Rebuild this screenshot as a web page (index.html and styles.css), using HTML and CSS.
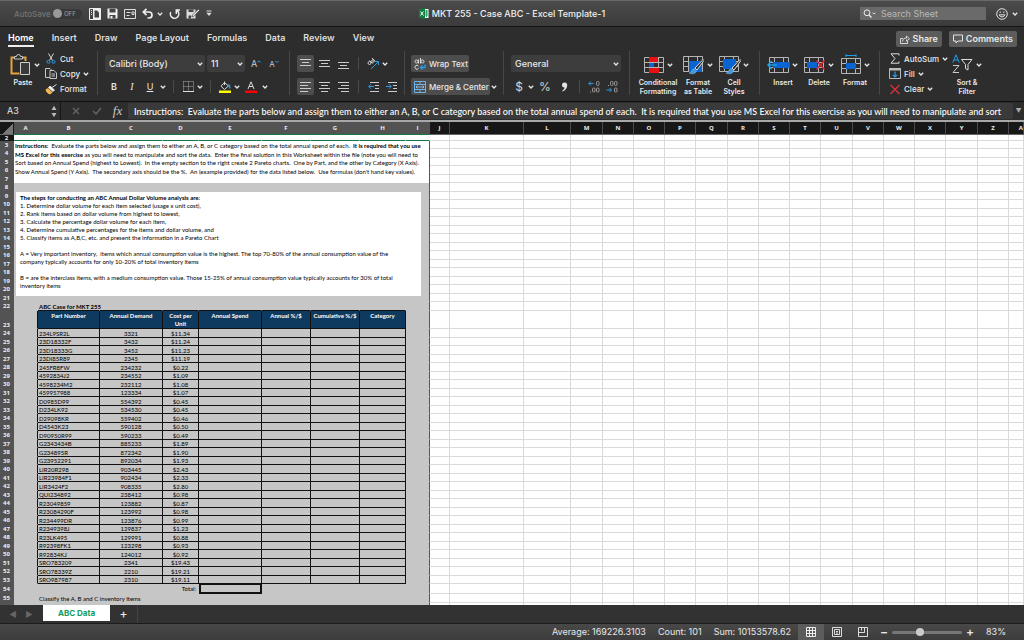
FILE: index.html
```html
<!DOCTYPE html>
<html lang="en">
<head>
<meta charset="utf-8">
<title>MKT 255 - Case ABC - Excel Template-1</title>
<link rel="stylesheet" href="styles.css">
</head>
<body>
<svg class="defs" aria-hidden="true">
  <symbol id="chev" viewBox="0 0 6 4"><path d="M.8.8 3 3 5.200.8" fill="none" stroke="#e8e8e8" stroke-width="1.300"/></symbol>
  <symbol id="grid" viewBox="0 0 20 16"><path d="M.5.5h19v15H.5zM.5 5.500h19M.5 10.500h19M5.500.5v15M14.500.5v15" fill="none" stroke="#b4b4b4"/></symbol>
  <symbol id="brush" viewBox="0 0 16 16"><path d="M15 1 7 9.500l2 2L16 2z" fill="#2d2d2d" stroke="#d8d8d8"/><path d="M1 14.500c3 0 2-3.500 5-4.500l2.500 2.300C8 15.500 4 16 1 14.500z" fill="#3f9be0" stroke="#8cc4f0" stroke-width=".5"/></symbol>
</svg>

<header class="titlebar">
  <div class="quick">
    <span class="autosave">AutoSave</span>
    <button class="toggle" aria-label="AutoSave off"><i></i>OFF</button>
    <button class="q" aria-label="Home"><svg width="12" height="12" viewBox="0 0 12 12"><path d="M.5.5h11v11H.5z" fill="none" stroke="#eee"/><path d="M2 2.500h1M2 4.500h1M2 6.500h1" stroke="#eee"/><path d="M4 .5h7.500v11H4z" fill="#eee"/><path d="M5.500 2.500H8L10 4.500v5H5.500z" fill="#444"/></svg></button>
    <button class="q" aria-label="Save"><svg width="11" height="11" viewBox="0 0 11 11"><path d="M.5.5h9l1 1v9H.5z" fill="#eee"/><path d="M2.500.8h6v3.700h-6zM2.500 7h6v3.500h-6z" fill="#444"/><path d="M3.500 8h2v2.500h-2z" fill="#eee"/></svg></button>
    <button class="q" aria-label="Email"><svg width="12" height="10" viewBox="0 0 12 10"><path d="M.5.5h11v9H.5z" fill="none" stroke="#ddd"/><path d="M2.500 3.500h4M2.500 6.500h3M8 3h2v2.500H8z" stroke="#ddd" fill="none"/></svg></button>
    <button class="q undo" aria-label="Undo"><svg width="11" height="11" viewBox="0 0 11 11"><path d="M1.500 4H7a3 3 0 0 1 0 6H5.500M4.500.8 1.300 4l3.200 3.200" fill="none" stroke="#eee" stroke-width="1.700"/></svg><svg class="c"><use href="#chev"/></svg></button>
    <button class="q" aria-label="Redo"><svg width="11" height="12" viewBox="0 0 11 12"><path d="M1.800 4.200a4.200 4.200 0 1 0 6-1.700M7.300 6V2h4" fill="none" stroke="#eee" stroke-width="1.500"/></svg></button>
    <button class="q" aria-label="Edit"><svg width="14" height="12" viewBox="0 0 14 12"><path d="M.5 1.500h9v9H.5z" fill="#ddd"/><path d="M2.500 1.500h5V4h-5zM2.500 7.500H5v3H2.500z" fill="#444"/><path d="M12.500 1 6.500 7l-.7 2 2-.7 5.700-6z" fill="#eee" stroke="#444" stroke-width=".7"/></svg></button>
    <button class="q" aria-label="Customize"><svg width="6" height="7" viewBox="0 0 6 7"><path d="M.5 1h5" stroke="#ddd"/><path d="M.3 2.800h5.400L3 6z" fill="#ddd"/></svg></button>
  </div>
  <h1 class="doc"><svg width="10" height="11" viewBox="0 0 10 11"><path d="M4 1h5.500v9H4z" fill="#fff"/><path d="M6 3h3M6 5h3M6 7h3M7.500 2v7" stroke="#21a366" fill="none"/><path d="M0 1.200 6 0v11L0 9.800z" fill="#107c41"/><path d="m1.500 3.500 3 4M4.500 3.500l-3 4" stroke="#fff"/></svg>MKT 255 - Case ABC - Excel Template-1</h1>
  <div class="find">
    <label class="search"><svg width="14" height="9" viewBox="0 0 14 9"><circle cx="4" cy="3.800" r="2.900" fill="none" stroke="#eee"/><path d="m6 6 2.500 2.500" stroke="#eee" stroke-width="1.200"/><path d="m9.500 3.800 1.500 1.200 1.500-1.200" fill="none" stroke="#ddd"/></svg><input type="text" placeholder="Search Sheet" aria-label="Search Sheet"></label>
    <button class="smile" aria-label="Feedback"><svg width="12" height="12" viewBox="0 0 12 12"><circle cx="6" cy="6" r="5.300" fill="none" stroke="#e2e2e2"/><path d="M3.200 6.800a2.900 2.900 0 0 0 5.600 0z" fill="none" stroke="#e2e2e2"/><path d="M4.200 3.500v1.500M7.800 3.500v1.500" stroke="#e2e2e2"/></svg><svg class="c"><use href="#chev"/></svg></button>
  </div>
</header>

<nav class="tabs">
  <a href="#" class="on">Home</a><a href="#">Insert</a><a href="#">Draw</a><a href="#">Page Layout</a><a href="#">Formulas</a><a href="#">Data</a><a href="#">Review</a><a href="#">View</a>
  <span class="grow"></span>
  <button class="pill"><svg width="10" height="9" viewBox="0 0 10 9"><path d="M3 3.500H.5v5h7V6M2.500 6.500c.3-2.500 1.800-3.500 4-3.500V1L9.500 3.800 6.500 6V4.500" fill="none" stroke="#e4e4e4" stroke-width=".9"/></svg>Share</button>
  <button class="pill"><svg width="10" height="10" viewBox="0 0 10 10"><path d="M.5 1h9v6H5L3 9V7H.5z" fill="none" stroke="#e4e4e4"/></svg>Comments</button>
</nav>

<section class="ribbon">
  <div class="group clip">
    <button class="big paste"><span class="pic"><svg width="22" height="22" viewBox="0 0 22 22"><path d="M4 3.500H1.500v16h8M13 3.500h2.500V7" fill="none" stroke="#e8a33d" stroke-width="2"/><path d="M4.500 5V2.500h2a2 2 0 0 1 4 0h2V5z" fill="#2d2d2d" stroke="#c8c8c8"/><path d="M10.500 8.500h9v12h-9z" fill="#3a3a3a" stroke="#d0d0d0"/></svg></span><svg class="c"><use href="#chev"/></svg><b>Paste</b></button>
    <div class="list">
      <button><svg width="12" height="11" viewBox="0 0 12 11"><path d="m3.500.5 4 7M8.500.5l-4 7" stroke="#d8d8d8" fill="none"/><circle cx="3.500" cy="8.800" r="1.500" fill="none" stroke="#2b9be8"/><circle cx="8.500" cy="8.800" r="1.500" fill="none" stroke="#2b9be8"/></svg>Cut</button>
      <button><svg width="12" height="11" viewBox="0 0 12 11"><path d="M5 9.500H.5v-9H5l1.500 1.500" fill="none" stroke="#c8c8c8"/><path d="M5 2.500h4L11.500 5v5.500H5zM6.500 6h3.500M6.500 8h3.500" fill="#2d2d2d" stroke="#c8c8c8"/></svg>Copy<svg class="c"><use href="#chev"/></svg></button>
      <button><svg width="12" height="11" viewBox="0 0 12 11"><path d="M11.500.5 7 3.500M5 2l4.500 4L8 7.500 3.500 3.500z" fill="#eee" stroke="#ddd"/><path d="m3 4 4.500 4.500L5 10.500C2.500 9.500 1 8 .5 5.500z" fill="#f0b64f"/></svg>Format</button>
    </div>
  </div>
  <div class="group font">
    <div class="row">
      <select class="face" aria-label="Font"><option>Calibri (Body)</option></select>
      <select class="size" aria-label="Font size"><option>11</option></select>
      <button class="w20 lt" aria-label="Grow font">A<svg width="4" height="8" viewBox="0 0 4 8"><path d="M.3 2.500 2 .8l1.700 1.700" fill="none" stroke="#2b9be8"/></svg></button>
      <button class="w16 lt sm" aria-label="Shrink font">A<svg width="4" height="8" viewBox="0 0 4 8"><path d="M.3.8 2 2.500 3.700.8" fill="none" stroke="#2b9be8"/></svg></button>
    </div>
    <div class="row">
      <button class="w18 bold">B</button><button class="w18 ital">I</button><button class="w18 und">U</button><svg class="c"><use href="#chev"/></svg><i class="bar"></i>
      <button class="w16" aria-label="Borders"><svg width="11" height="11" viewBox="0 0 11 11"><path d="M.5.5h10v10M.5.5v10M5.500.5v10M.5 5.500h10" stroke="#aaa" stroke-dasharray="1 1" fill="none"/><path d="M0 10.500h11" stroke="#ddd"/></svg></button><svg class="c"><use href="#chev"/></svg><i class="bar"></i>
      <button class="w16" aria-label="Fill color"><svg width="12" height="12" viewBox="0 0 12 12"><path d="M5.500 1.500 9.500 5 5.500 8.500 2 5.200zM5.500 4V.5" fill="none" stroke="#d8d8d8"/><path d="M9.500 3.500c1 1 1.800 2.300 1 4" fill="none" stroke="#2b9be8" stroke-width="1.500"/><path d="M0 9.500h12V12H0z" fill="#ff0"/></svg></button><svg class="c"><use href="#chev"/></svg>
      <button class="w20" aria-label="Font color"><svg width="12" height="12" viewBox="0 0 12 12"><path d="M3 8 6 .8 9 8M4 5.500h4" fill="none" stroke="#d8d8d8"/><path d="M0 9.500h12V12H0z" fill="red"/></svg></button><svg class="c"><use href="#chev"/></svg>
    </div>
  </div>
  <div class="group align">
    <div class="row">
      <button class="sq on" aria-label="Top align"><svg width="11" height="11" viewBox="0 0 11 11"><path d="M0 1.500h11M2 4.500h7M0 7.500h11" stroke="#ccc"/></svg></button>
      <button class="sq" aria-label="Middle align"><svg width="11" height="11" viewBox="0 0 11 11"><path d="M0 2.500h11M2 5.500h7M0 8.500h11" stroke="#ccc"/></svg></button>
      <button class="sq" aria-label="Bottom align"><svg width="11" height="11" viewBox="0 0 11 11"><path d="M0 4.500h11M2 7.500h7M0 10.500h11" stroke="#ccc"/></svg></button>
      <i class="bar"></i>
      <button class="w16" aria-label="Orientation"><svg width="12" height="12" viewBox="0 0 12 12"><path d="m4 11 7-7M8 3.500h3.500V7" fill="none" stroke="#2b9be8"/><circle cx="2.500" cy="5" r="1.500" fill="none" stroke="#ccc"/><path d="m2.500 2.500 3 3M5 0l3 3" stroke="#ccc"/><circle cx="6" cy="3" r="1.300" fill="none" stroke="#ccc"/></svg></button><svg class="c"><use href="#chev"/></svg>
    </div>
    <div class="row">
      <button class="sq on" aria-label="Align left"><svg width="11" height="11" viewBox="0 0 11 11"><path d="M0 1.500h11M0 4.500h8M0 7.500h11M0 10.500h8" stroke="#ccc"/></svg></button>
      <button class="sq" aria-label="Center"><svg width="11" height="11" viewBox="0 0 11 11"><path d="M0 1.500h11M2 4.500h7M0 7.500h11M2 10.500h7" stroke="#ccc"/></svg></button>
      <button class="sq" aria-label="Align right"><svg width="11" height="11" viewBox="0 0 11 11"><path d="M0 1.500h11M3 4.500h8M0 7.500h11M3 10.500h8" stroke="#ccc"/></svg></button>
      <i class="bar"></i>
      <button class="w16" aria-label="Decrease indent"><svg width="11" height="11" viewBox="0 0 11 11"><path d="M2 1.500h9M7 4.500h4M7 7.500h4M2 10.500h9" stroke="#ccc"/><path d="M6 5.500H.8M3 3.200.8 5.500 3 7.800" fill="none" stroke="#2b9be8"/></svg></button>
      <button class="w20" aria-label="Increase indent"><svg width="11" height="11" viewBox="0 0 11 11"><path d="M2 1.500h9M7 4.500h4M7 7.500h4M2 10.500h9" stroke="#ccc"/><path d="M0 5.500h5.200M3 3.200l2.200 2.300L3 7.800" fill="none" stroke="#2b9be8"/></svg></button>
    </div>
  </div>
  <div class="group wrap">
    <div class="row"><button class="txt"><svg width="12" height="12" viewBox="0 0 12 12"><circle cx="2.500" cy="3.500" r="1.500" fill="none" stroke="#ddd"/><path d="M4.500 1.500v4M6.500 0v5.500M4.500 8a2 2 0 1 0 0 2.500" fill="none" stroke="#ddd"/><circle cx="8.500" cy="3.500" r="1.500" fill="none" stroke="#ddd"/><path d="M11 6.500v3H6.500M8.500 7.500l-2 2 2 2" fill="none" stroke="#2b9be8" stroke-width="1.300"/></svg>Wrap Text</button></div>
    <div class="row"><button class="txt"><svg width="12" height="12" viewBox="0 0 12 12"><path d="M.5.5h11v11H.5zM.5 3.500h11M.5 8.500h11M6 .5v3M6 8.500v3" fill="none" stroke="#6db3ea"/><path d="M2 6h8M3.500 4.500 2 6l1.500 1.500M8.500 4.500 10 6 8.500 7.500" fill="none" stroke="#9fd0f5" stroke-width=".8"/></svg>Merge &amp; Center</button><svg class="c"><use href="#chev"/></svg></div>
  </div>
  <div class="group number">
    <div class="row"><select class="fmt" aria-label="Number format"><option>General</option></select></div>
    <div class="row">
      <button class="w16 sym">$</button><svg class="c"><use href="#chev"/></svg><button class="w20 sym">%</button><button class="w18" aria-label="Comma style"><svg width="7" height="10" viewBox="0 0 7 10"><path d="M3.500.5A2.500 2.500 0 0 1 6.200 3.300C6.200 6 4.500 8.500 1.500 9.500L1.200 8.700C2.700 7.800 3.400 6.800 3.500 5.500A2.500 2.500 0 1 1 3.500.5z" fill="#e4e4e4"/></svg></button><i class="bar"></i>
      <button class="w16" aria-label="Increase decimal"><svg width="12" height="12" viewBox="0 0 12 12"><path d="M5.500 2.500H.8M2.800.5l-2 2 2 2" fill="none" stroke="#2b9be8"/><rect x="8.500" y=".5" width="2.500" height="4" rx="1" fill="none" stroke="#999"/><rect x="4.500" y="7" width="2.500" height="4" rx="1" fill="none" stroke="#999"/><rect x="8.500" y="7" width="2.500" height="4" rx="1" fill="none" stroke="#999"/><path d="M2 11h1" stroke="#999"/></svg></button>
      <button class="w20" aria-label="Decrease decimal"><svg width="12" height="12" viewBox="0 0 12 12"><path d="M.5 9h5M3.500 7l2 2-2 2" fill="none" stroke="#2b9be8"/><rect x="4.500" y=".5" width="2.500" height="4" rx="1" fill="none" stroke="#999"/><rect x="8.500" y=".5" width="2.500" height="4" rx="1" fill="none" stroke="#999"/><rect x="8.500" y="7" width="2.500" height="4" rx="1" fill="none" stroke="#999"/><path d="M2 4.500h1" stroke="#999"/></svg></button>
    </div>
  </div>
  <div class="group bigs styles">
    <button class="big cond"><span class="pic"><svg width="20" height="16" viewBox="0 0 20 16"><use href="#grid" width="20" height="16"/><path d="M5 0h9v5H5zM5 11h10v5H5z" fill="#e81010"/><path d="M5 6h5v4H5z" fill="#0a64d2"/></svg></span><svg class="c"><use href="#chev"/></svg><b>Conditional<br>Formatting</b></button>
    <button class="big"><span class="pic"><svg width="22" height="19" viewBox="0 0 22 19"><use href="#grid" width="20" height="16"/><path d="M6 5h13v11H6z" fill="#0a64d2"/><use href="#brush" x="5" y="2" width="16" height="17"/></svg></span><svg class="c"><use href="#chev"/></svg><b>Format<br>as Table</b></button>
    <button class="big"><span class="pic"><svg width="22" height="19" viewBox="0 0 22 19"><use href="#grid" width="20" height="16"/><path d="M4 3h13v10H4z" fill="#0a64d2"/><use href="#brush" x="6" y="2" width="16" height="17"/></svg></span><svg class="c"><use href="#chev"/></svg><b>Cell<br>Styles</b></button>
  </div>
  <div class="group bigs cells">
    <button class="big"><span class="pic"><svg width="23" height="16" viewBox="0 0 23 16"><use href="#grid" x="2" width="20" height="16"/><path d="M6 5h17v6H6z" fill="#0a64d2"/><path d="M10 8H1M4.500 4 .8 8l3.700 4" fill="none" stroke="#1ba0e8" stroke-width="1.300"/></svg></span><svg class="c"><use href="#chev"/></svg><b>Insert</b></button>
    <button class="big"><span class="pic"><svg width="22" height="16" viewBox="0 0 22 16"><use href="#grid" width="20" height="16"/><path d="M3 5h10v6H3z" fill="#0a64d2"/><path d="m12.500 3.500 8 9M20.500 3.500l-8 9" stroke="#e02030" stroke-width="1.500"/></svg></span><svg class="c"><use href="#chev"/></svg><b>Delete</b></button>
    <button class="big tall"><span class="pic"><svg width="20" height="20" viewBox="0 0 20 20"><use href="#grid" y="4" width="20" height="16"/><path d="M5 9h10v6H5z" fill="#0a64d2"/><path d="M5 1.500h10M5 0v3M15 0v3" stroke="#1ba0e8"/></svg></span><svg class="c"><use href="#chev"/></svg><b>Format</b></button>
  </div>
  <div class="group edit">
    <div class="list">
      <button><svg width="12" height="11" viewBox="0 0 12 11"><path d="M10 2.500V.8H2l4 4.700-4 4.700h8V8.500" fill="none" stroke="#ddd"/></svg>AutoSum<svg class="c"><use href="#chev"/></svg></button>
      <button><svg width="12" height="11" viewBox="0 0 12 11"><path d="M.5.5h11v10H.5z" fill="none" stroke="#bbb"/><path d="M0 .5h12v2H0z" fill="#bbb"/><path d="M6 3.500V9M3.800 6.800 6 9l2.200-2.200" fill="none" stroke="#2b9be8" stroke-width="1.200"/></svg>Fill<svg class="c"><use href="#chev"/></svg></button>
      <button><svg width="12" height="11" viewBox="0 0 12 11"><path d="m1.500 1 9 9M10.500 1l-9 9" stroke="#e0303c" stroke-width="1.200"/></svg>Clear<svg class="c"><use href="#chev"/></svg></button>
    </div>
    <button class="big tall"><span class="pic"><svg width="21" height="20" viewBox="0 0 21 20"><path d="M.8 8.500 4 .8l3.200 7.700M2 6h4" fill="none" stroke="#1ba0e8"/><path d="M1 11.500h6l-6 7h6" fill="none" stroke="#ccc"/><path d="M9.500 5.500h10.500l-4 5v5.500l-2.500-1.500v-4z" fill="none" stroke="#ddd"/></svg></span><svg class="c"><use href="#chev"/></svg><b>Sort &amp;<br>Filter</b></button>
  </div>
</section>

<section class="formula">
  <label class="name"><input type="text" value="A3" aria-label="Name box"><svg width="6" height="13" viewBox="0 0 6 13"><path d="M.5 5 3 .8 5.500 5zM.5 8 3 12.200 5.500 8z" fill="#b8b8b8"/></svg></label>
  <button aria-label="Cancel"><svg width="8" height="8" viewBox="0 0 8 8"><path d="m1 1 6 6M7 1 1 7" stroke="#666" stroke-width="1.300"/></svg></button>
  <button aria-label="Enter"><svg width="10" height="8" viewBox="0 0 10 8"><path d="m1 4 3 3 5-6" fill="none" stroke="#666" stroke-width="1.400"/></svg></button>
  <button class="fx">fx</button>
  <input class="value" type="text" aria-label="Formula" value="Instructions:  Evaluate the parts below and assign them to either an A, B, or C category based on the total annual spend of each.  It is required that you use MS Excel for this exercise as you will need to manipulate and sort">
  <button class="more" aria-label="Expand">▼</button>
</section>

<main class="sheet"><table id="cells"></table></main>

<footer>
  <div class="sheets">
    <button class="arrow" aria-label="Previous sheet">◀</button><button class="arrow" aria-label="Next sheet">▶</button><button class="tab">ABC Data</button><button class="add" aria-label="Add sheet">+</button>
  </div>
  <div class="status">
    <span>Average: 169226.3103</span><span>Count: 101</span><span class="sum">Sum: 10153578.62</span>
    <button class="view on" aria-label="Normal"><svg width="10" height="10" viewBox="0 0 10 10"><path d="M.5.5h9v9h-9zM.5 3.500h9M.5 6.500h9M3.500.5v9M6.500.5v9" fill="none" stroke="#eee"/></svg></button>
    <button class="view" aria-label="Page layout"><svg width="10" height="10" viewBox="0 0 10 10"><path d="M.5.5h9v9h-9zM2.500 2.500h5v5h-5zM4 4.500h2M4 6h2" fill="none" stroke="#ddd"/></svg></button>
    <button class="view" aria-label="Page break"><svg width="10" height="10" viewBox="0 0 10 10"><path d="M.5.5h9v9h-9zM.5 5.500h6v-5M3.500.5v3M6.500 5.500v-2" fill="none" stroke="#ddd"/></svg></button>
    <button class="zoom" aria-label="Zoom out">−</button><input type="range" min="10" max="200" value="83" aria-label="Zoom"><button class="zoom" aria-label="Zoom in">+</button><span class="pct">83%</span>
  </div>
</footer>
<script src="sheet.js"></script>
</body>
</html>
```
FILE: styles.css
```css
* { box-sizing: border-box; }
body { margin: 0; height: 100vh; display: flex; flex-direction: column; overflow: hidden; background: #2d2d2d; color: #e8e8e8; font: 500 8px/10px Inter, sans-serif; }
button, input, select { font: inherit; color: inherit; background: none; border: 0; padding: 0; margin: 0; border-radius: 0; outline: 0; }
button { display: inline-flex; align-items: center; justify-content: center; white-space: nowrap; }
svg { flex: none; display: block; }
.defs { position: absolute; width: 0; height: 0; }
.c { width: 6px; height: 4px; }

/* title bar */
.titlebar { display: grid; grid-template-columns: 1fr auto 1fr; align-items: center; height: 27px; flex: none; background: linear-gradient(#4b4b4b, #3b3b3b); border-top: 1px solid #686868; border-bottom: 1px solid #161616; }
.quick { display: flex; align-items: center; padding-left: 14px; }
.autosave { color: #747474; font-size: 8px; width: 39px; }
.toggle { width: 29px; height: 10px; border-radius: 5px; background: #383838; color: #999; font-size: 6px; justify-content: flex-start; gap: 2px; }
.toggle i { width: 9px; height: 9px; border-radius: 50%; background: #9a9a9a; }
.q { margin-left: 6px; }
.toggle + .q { margin-left: 7px; }
.undo { gap: 4px; }
.doc { margin: 0; font-size: 9px; font-weight: 500; line-height: 12px; display: flex; align-items: center; gap: 3px; color: #f0f0f0; }
.find { display: flex; justify-content: flex-end; align-items: center; gap: 10px; padding-right: 6px; }
.search { display: flex; align-items: center; gap: 4px; width: 126px; height: 13px; padding-left: 3px; background: #6a6a6a; border-radius: 1px; }
.search input { width: 100%; font-size: 9px; font-weight: 400; }
.search input::placeholder { color: #b8b8b8; opacity: 1; }
.smile { gap: 4px; }

/* ribbon tabs */
.tabs { display: flex; align-items: center; gap: 18px; height: 24px; flex: none; padding: 0 7px 0 8px; font-size: 9px; font-weight: 600; }
.tabs a { color: #dedede; text-decoration: none; line-height: 14px; border-bottom: 2px solid transparent; }
.tabs a.on { color: #fff; border-color: #eee; }
.grow { flex: 1; }
.pill { height: 16px; padding: 0 4px; gap: 3px; background: #5c5c5c; border-radius: 2px; font-weight: 600; }
.pill + .pill { margin-left: -11px; }

/* ribbon */
.ribbon { display: flex; height: 50px; flex: none; padding-bottom: 6px; }
.group { flex: none; border-right: 1px solid #484848; }
.group:last-child { border: 0; }
.row { display: flex; align-items: center; height: 17px; margin-top: 4px; }
.row + .row { margin-top: 6px; }
.clip, .edit { display: flex; }
.clip { width: 98px; }
.font { width: 192px; padding-left: 7px; }
.align { width: 115px; padding-left: 7px; }
.wrap { width: 99px; padding-left: 6px; }
.number { width: 126px; padding-left: 7px; }
.styles { width: 130px; padding-left: 6px; }
.cells { width: 120px; padding-left: 5px; }
.edit { padding-left: 9px; }
.bigs { display: flex; }
.big { display: grid; grid-template-columns: 24px 9px; grid-template-rows: 26px auto; align-content: start; justify-items: center; width: 36px; font-size: 7px; line-height: 9px; margin-top: 1px; }
.big b { grid-column: 1 / 3; font-weight: 600; }
.styles .big, .cells .big { justify-content: center; }
.tall .pic { padding-bottom: 2px; }
.cond { width: 44px; }
.paste { margin-left: 9px; width: 32px; }
.paste b { justify-self: start; padding-left: 5px; }
.list { display: flex; flex-direction: column; gap: 4px; padding-top: 2px; }
.list button { height: 12px; gap: 3px; justify-content: flex-start; font-size: 8px; }
.clip .list { padding-left: 4px; }
.edit .list { width: 60px; }
select { appearance: none; height: 17px; padding: 0 4px; border-radius: 2px; font-size: 9px; background: #3d3d3d url("data:image/svg+xml,%3Csvg xmlns='http://www.w3.org/2000/svg' width='6' height='4'%3E%3Cpath d='M.8.8 3 3 5.200.8' fill='none' stroke='%23e8e8e8' stroke-width='1.300'/%3E%3C/svg%3E") no-repeat right 2px center; }
.face { width: 100px; margin-right: 2px; }
.size { width: 38px; }
.fmt { width: 110px; }
.w16 { width: 16px; }
.w18 { width: 18px; }
.w20 { width: 20px; }
.lt { font-size: 9px; font-weight: 400; color: #ccc; }
.size + .lt { margin-left: 1px; }
.sm { font-size: 8px; }
.row .c { margin: 0 1px; }
.bold { font-weight: 600; font-size: 9px; }
.ital { font: italic 10px "Liberation Serif", serif; }
.und { font-size: 9px; text-decoration: underline; font-weight: 400; }
.bar { width: 1px; height: 13px; background: #4a4a4a; margin: 0 6px; }
.sq { width: 17px; height: 17px; margin-right: 2px; border-radius: 2px; }
.sq.on, .txt { background: #4d4d4d; }
.sq + .bar { margin-left: 4px; }
.txt { height: 17px; padding: 0 1px 0 3px; gap: 3px; border-radius: 2px; font-size: 8px; }
.sym { font-size: 12px; font-weight: 400; color: #d4d4d4; }

/* formula bar */
.formula { display: flex; align-items: center; height: 21px; flex: none; border-top: 1px solid #111; border-bottom: 2px solid #a8a8a8; background: #2d2d2d; }
.name { display: flex; align-items: center; width: 61px; height: 100%; padding: 0 3px 0 7px; border-right: 1px solid #161616; }
.name input { width: 44px; font-size: 9px; font-weight: 400; }
.formula button { width: 21px; }
.formula button:first-of-type { margin-left: 4px; }
.formula .fx { font: italic 13px "Liberation Serif", serif; color: #ccc; }
.value { flex: 1; min-width: 0; height: 16px; padding: 0 6px; background: #3a3a3a; border-radius: 2px; font: 500 9px Lato, sans-serif; color: #fff; }
.formula .more { width: 11px; font-size: 6px; color: #aaa; }

/* worksheet */
.sheet { flex: 1; min-height: 0; overflow: hidden; background: #fff; color: #000; }
table { width: 100%; table-layout: fixed; border-collapse: separate; border-spacing: 0; font: 6px/7px Lato, sans-serif; }
th, td { padding: 0; border: 0 solid #dadada; white-space: nowrap; overflow: hidden; }
td { border-width: 0 1px 1px 0; }
.heads th { height: 13px; background: #171717; color: #eee; border-right: 1px solid #4a4a4a; border-bottom: 1px solid #666; font: 700 6px/10px "Open Sans", sans-serif; }
.heads th.sel { background: #535353; border-right-color: #535353; border-bottom-color: #107c41; }
.heads th.corner { background: linear-gradient(135deg, #171717 60%, #777 60%); border-right-color: #171717; }
.heads th:last-child { text-align: right; }
.num { background: #535353; color: #eee; font: 700 6px/7px "Open Sans", sans-serif; border-right: 1px solid #107c41; text-align: center; }
.num.off { background: #171717; border-right-color: #171717; }
.h6 td, .h6 th { height: 6px; line-height: 5px; }
.h8 > * { height: 8px; }
.h9 > * { height: 9px; }
.h10 > * { height: 10px; }
.h18 > * { height: 18px; vertical-align: bottom; }
.g { background: #c6c6c6; border-color: #c6c6c6; }
.g.edge { border-right-color: #107c41; }
.top { border-bottom-color: #107c41; border-right-color: #fff; }
.intro { background: #fff; vertical-align: top; border-color: #107c41; border-bottom-width: 0; }
.lines { display: grid; grid-auto-rows: 1fr; height: 34px; margin-top: 1px; padding-left: 1px; }
.note { vertical-align: top; overflow: hidden; }
.textbox { margin: 9px 8px 0 2px; padding: 2px 4px; height: 104px; background: #fff; font-size: 6px; line-height: 8px; white-space: pre-line; overflow: hidden; }
.textbox p { margin: 0 0 8px; }
.d { border-color: #111; text-align: center; }
.d.first { text-align: left; padding-left: 1px; }
.pre { border-right-color: #111; }
.title { overflow: visible; font-weight: 700; border-bottom-color: #111; }
.hd { background: #0f3a5f; color: #fff; border-color: #111; font-weight: 700; line-height: 8px; text-align: center; vertical-align: top !important; white-space: normal; padding-top: 1px; }
.under { border-bottom-color: #111; }
.right { text-align: right; padding-right: 2px; }
.over { overflow: visible; }
.box { border: 2px solid #111; border-width: 1px 2px 2px; }
.txtcell { padding-left: 1px; }

/* sheet tabs and status */
footer { flex: none; }
.sheets { display: flex; align-items: flex-start; height: 18px; background: #323232; padding-left: 5px; }
.arrow { width: 16px; height: 18px; color: #666; font-size: 8px; }
.tab { margin-left: 6px; width: 67px; height: 16px; background: #fff; color: #159a5c; font-weight: 700; font-size: 8px; }
.add { width: 28px; height: 18px; font-size: 12px; border-right: 1px solid #444; }
.status { display: flex; align-items: center; justify-content: flex-end; height: 17px; border-top: 1px solid #1c1c1c; background: linear-gradient(#484848, #3c3c3c); font-size: 9px; font-weight: 400; gap: 12px; }
.status button, .status input, .status .pct { margin-left: -12px; }
.sum { margin-right: 7px; }
.view { width: 26px; height: 16px; }
.view.on { background: #5c5c5c; }
.zoom { width: 16px; font-size: 12px; font-weight: 600; }
input[type=range] { appearance: none; width: 70px; height: 3px; border-radius: 2px; background: #777; }
input[type=range]::-webkit-slider-thumb { appearance: none; width: 8px; height: 8px; border-radius: 50%; background: #ccc; }
.pct { width: 46px; padding-left: 8px; }
```
FILE: sheet.js
```js
const widths = [14, 24, 62, 63, 36, 63, 49, 49, 46, 24, 20, 74, 47];
for (let i = 0; i < 14; i++) widths.push(i % 4 === 0 ? 32 : 31);
const letters = [...'ABCDEFGHIJKLMNOPQRSTUVWXYZ', 'A'];
const data = [
  ['234L9SR2L', '3321', '$11.34'], ['23D18332F', '3432', '$11.24'], ['23D18333G', '3452', '$11.23'],
  ['23DI85R89', '2345', '$11.19'], ['245FR8FW', '234232', '$0.22'], ['4592834J2', '234552', '$1.09'],
  ['4598234M2', '232112', '$1.08'], ['459957988', '123334', '$1.07'], ['D0985D99', '554392', '$0.45'],
  ['D234LK92', '534530', '$0.45'], ['D29098KR', '559402', '$0.46'], ['D4543K23', '590128', '$0.50'],
  ['D90950R99', '590233', '$0.49'], ['G2343434B', '885233', '$1.89'], ['G234895R', '872342', '$1.90'],
  ['G23952291', '892034', '$1.93'], ['LIR20R298', '903445', '$2.43'], ['LIR23984F1', '902434', '$2.33'],
  ['LIR3424F2', '908335', '$2.80'], ['QUI234892', '238412', '$0.98'], ['R23049859', '123882', '$0.87'],
  ['R23084290F', '123992', '$0.98'], ['R234499DR', '123876', '$0.99'], ['R2349398J', '129837', '$1.23'],
  ['R23LK495', '129991', '$0.88'], ['R92398FK1', '123298', '$0.93'], ['R92834KJ', '124012', '$0.92'],
  ['SRO783209', '2341', '$19.43'], ['SRO78339Z', '2210', '$19.21'], ['SRO987987', '2310', '$19.11']
];
const td = (cls = '', text = '', attr = '') => `<td class="${cls}" ${attr}>${text}</td>`;
const blank = (n, cls) => td(cls).repeat(n);

const intro = `<div class="lines">
<span><b>Instructions:</b>&nbsp; Evaluate the parts below and assign them to either an A, B, or C category based on the total annual spend of each.&nbsp; <b>It is required that you use</b></span>
<span><b>MS Excel for this exercise</b> as you will need to manipulate and sort the data.&nbsp; Enter the final solution in this Worksheet within the file (note you will need to</span>
<span>Sort based on Annual Spend (highest to Lowest).&nbsp; In the empty section to the right create 2 Pareto charts.&nbsp; One by Part, and the other by Category (X Axis).</span>
<span>Show Annual Spend (Y Axis).&nbsp; The secondary axis should be the %.&nbsp; An (example provided) for the data listed below.&nbsp; Use formulas (don't hand key values).</span></div>`;
const note = `<div class="textbox"><p><b>The steps for conducting an ABC Annual Dollar Volume analysis are:</b>
1. Determine dollar volume for each item selected (usage x unit cost),
2. Rank items based on dollar volume from highest to lowest,
3. Calculate the percentage dollar volume for each item,
4. Determine cumulative percentages for the items and dollar volume, and
5. Classify items as A,B,C, etc. and present the information in a Pareto Chart</p><p>A = Very important inventory,&nbsp; items which annual consumption value is the highest. The top 70-80% of the annual consumption value of the
company typically accounts for only 10-20% of total inventory items</p><p>B = are the interclass items, with a medium consumption value. Those 15-25% of annual consumption value typically accounts for 30% of total
inventory items</p></div>`;

function left(r) {
  if (r === 2) return blank(9, 'top');
  if (r === 3) return td('intro', intro, 'colspan="9" rowspan="5"');
  if (r === 8) return td('g edge note', note, 'colspan="9" rowspan="14"');
  if (r < 22) return '';
  if (r === 22) return td('g') + td('g title txtcell', 'ABC Case for MKT 255') + blank(6, 'g under') + td('g edge');
  if (r === 23) return td('g pre') + ['Part Number', 'Annual Demand', 'Cost per<br>Unit', 'Annual Spend', 'Annual %/$', 'Cumulative %/$', 'Category'].map(t => td('hd', t)).join('') + td('g edge');
  if (r < 54) {
    const [a, b, c] = data[r - 24];
    return td('g pre') + td('g d first', a) + td('g d', b) + td('g d', c) + blank(4, 'g d') + td('g edge');
  }
  if (r === 54) return blank(3, 'g') + td('g right', 'Total:') + td('g box') + blank(3, 'g') + td('g edge');
  if (r === 55) return td('g') + td('g over txtcell', 'Classify the A, B and C inventory Items') + blank(6, 'g') + td('g edge');
  return blank(8, 'g') + td('g edge');
}

let html = '<colgroup>' + widths.map(w => `<col style="width:${w}px">`).join('') + '<col></colgroup>';
html += '<tr class="heads"><th class="corner"></th>' + letters.map((l, i) => `<th class="${i < 9 ? 'sel' : ''}">${l}</th>`).join('') + '</tr>';
for (let r = 2; r <= 56; r++) {
  const h = r === 2 ? 'h6' : r === 23 ? 'h18' : r === 54 ? 'h10' : r > 54 ? 'h9' : r % 2 ? 'h8' : 'h9';
  html += `<tr class="${h}"><th class="num ${r === 2 ? 'off' : ''}">${r < 56 ? r : ''}</th>${left(r)}${blank(18)}</tr>`;
}
document.getElementById('cells').innerHTML = html;
```
